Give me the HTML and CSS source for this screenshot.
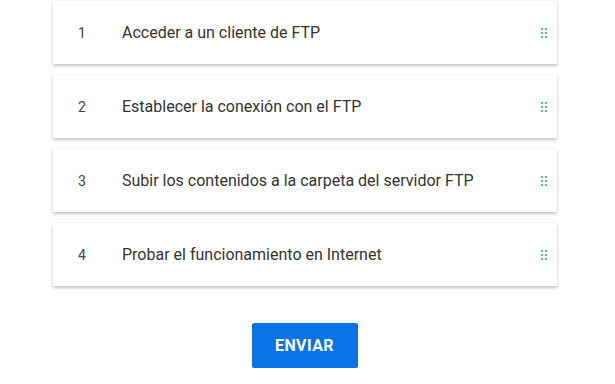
FILE: index.html
```html
<!DOCTYPE html>
<html lang="es">
<head>
<meta charset="utf-8">
<link rel="stylesheet" href="styles.css">
</head>
<body>
<main class="wrap">
  <ol class="steps">
    <li class="step"><span class="num">1</span><span class="label">Acceder a un cliente de FTP</span><span class="handle"><i></i><i></i><i></i><i></i><i></i><i></i></span></li>
    <li class="step"><span class="num">2</span><span class="label">Establecer la conexión con el FTP</span><span class="handle"><i></i><i></i><i></i><i></i><i></i><i></i></span></li>
    <li class="step"><span class="num">3</span><span class="label">Subir los contenidos a la carpeta del servidor FTP</span><span class="handle"><i></i><i></i><i></i><i></i><i></i><i></i></span></li>
    <li class="step"><span class="num">4</span><span class="label">Probar el funcionamiento en Internet</span><span class="handle"><i></i><i></i><i></i><i></i><i></i><i></i></span></li>
  </ol>
  <div class="actions"><button class="btn">ENVIAR</button></div>
</main>
</body>
</html>
```
FILE: styles.css
```css
html, body { margin: 0; padding: 0; background: #fff; }
body { font-family: Roboto, "Liberation Sans", sans-serif; color: #333; }
.wrap { width: 504px; padding: 1px 0 0 53px; }
.steps { list-style: none; margin: 0; padding: 0; display: flex; flex-direction: column; gap: 11px; }
.step {
  height: 63px; background: #fff; display: flex; align-items: center;
  box-shadow: 0 2px 3px rgba(0,0,0,0.22), 0 0 2px rgba(0,0,0,0.08);
}
.num { width: 25px; margin-left: 25px; font-size: 14px; color: #444; }
.label { flex: 1; margin-left: 19px; font-size: 16px; color: #333; }
.handle { display: grid; grid-template-columns: 2px 2px; grid-auto-rows: 2px; column-gap: 2px; row-gap: 2px; margin-right: 10px; }
.handle i { width: 2px; height: 2px; background: #4db5c6; }
.actions { display: flex; justify-content: center; margin-top: 37px; padding-right: 1px; }
.btn {
  width: 106px; height: 45px; border: 0; border-radius: 2px; background: #0a73e6; color: #fff;
  font-family: Roboto, "Liberation Sans", sans-serif; font-weight: 700; font-size: 16px; letter-spacing: 0.4px; cursor: pointer;
}
```
